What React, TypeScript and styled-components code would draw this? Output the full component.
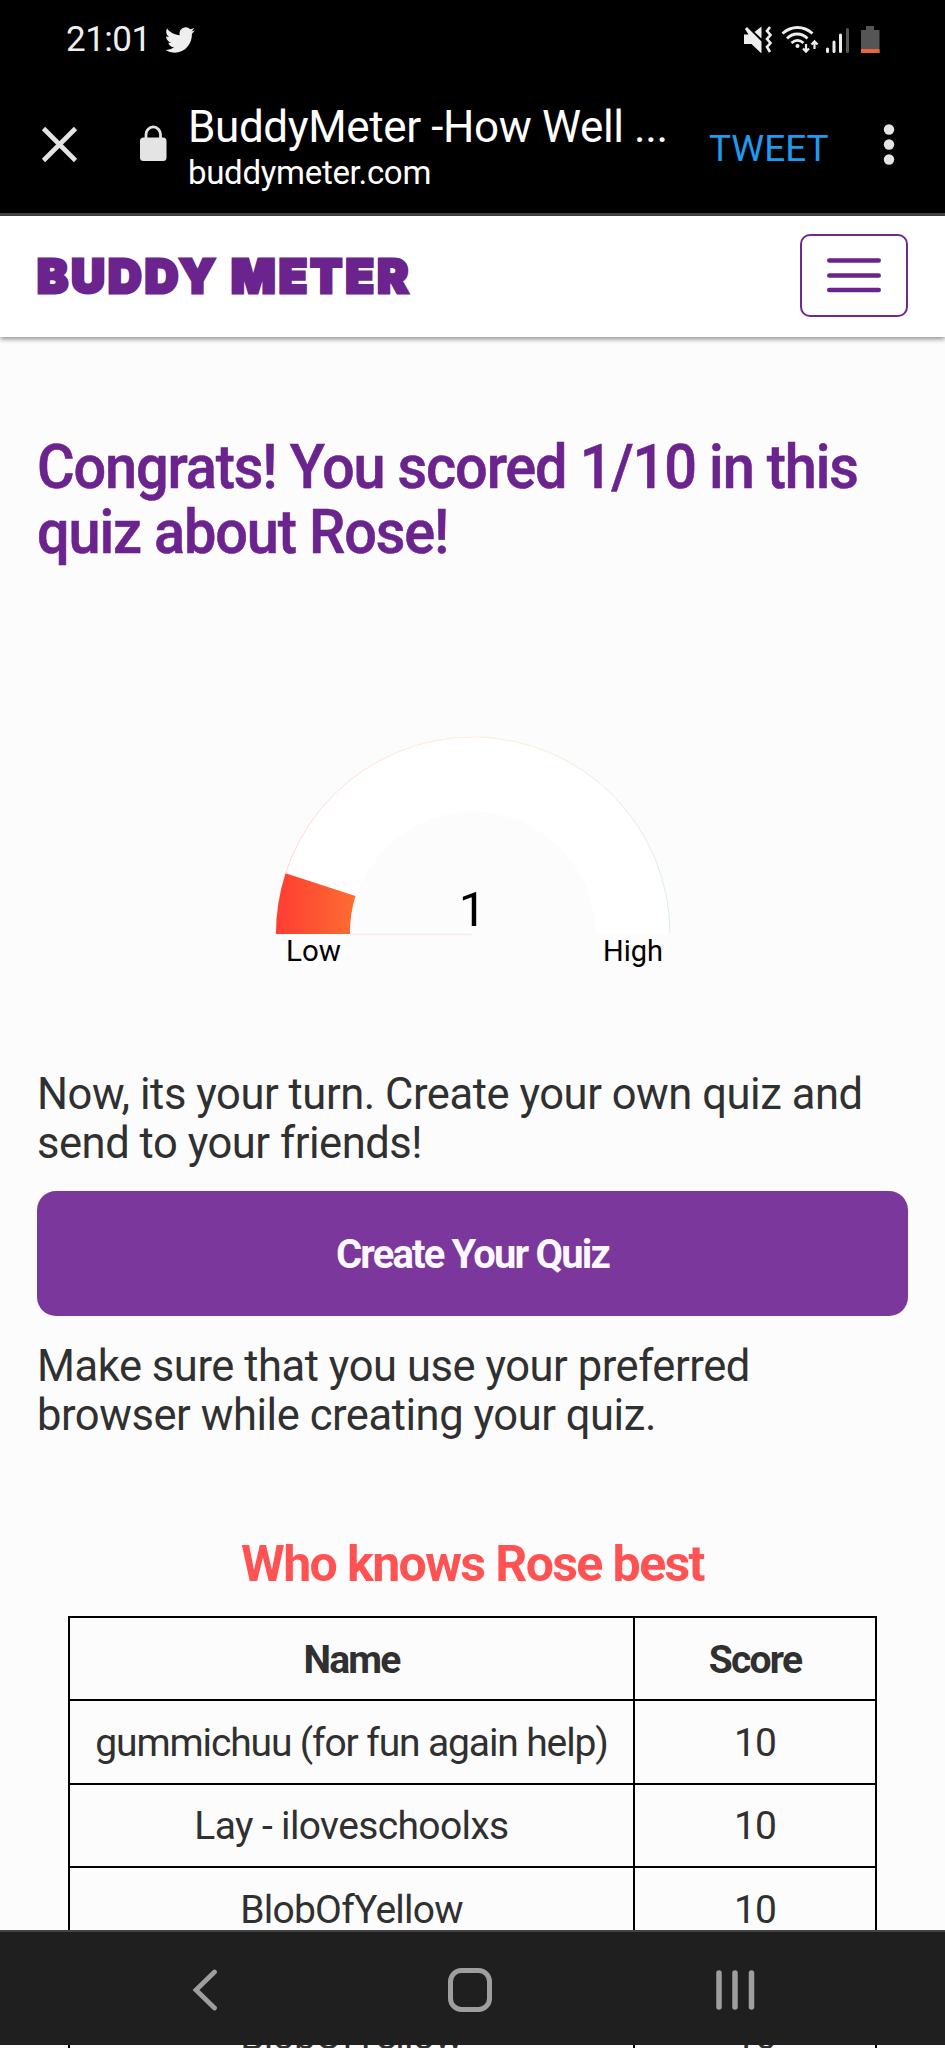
import React from 'react';
import styled, { createGlobalStyle } from 'styled-components';

const GlobalStyle = createGlobalStyle`
  html, body { margin: 0; padding: 0; background: #fcfcfc; }
  * { box-sizing: border-box; }
`;

const Screen = styled.div`
  width: 945px;
  height: 2048px;
  overflow: hidden;
  display: flex;
  flex-direction: column;
  background: #fcfcfc;
  font-family: Roboto, 'Liberation Sans', sans-serif;
  color: #303030;
`;

const StatusBar = styled.div`
  flex: none;
  height: 80px;
  background: #000;
  display: flex;
  align-items: center;
  padding: 0 64px 0 66px;
`;
const Clock = styled.span`
  font-size: 35px;
  line-height: 40px;
  letter-spacing: -0.5px;
  color: #eee;
  margin-right: 14px;
`;
const StatusIcons = styled.div`
  margin-left: auto;
  display: flex;
`;

const BrowserBar = styled.div`
  flex: none;
  height: 136px;
  background: #000;
  border-bottom: 3px solid #444;
  display: flex;
  align-items: flex-start;
  color: #fff;
`;
const CloseIcon = styled.svg`
  margin: 46px 62px 0 41px;
  flex: none;
`;
const LockIcon = styled.svg`
  margin: 45px 21px 0 0;
  flex: none;
`;
const TitleBlock = styled.div`
  width: 521px;
  padding-top: 20px;
`;
const PageTitle = styled.div`
  font-size: 44px;
  line-height: 54px;
  letter-spacing: -0.38px;
  white-space: nowrap;
`;
const PageHost = styled.div`
  font-size: 33px;
  line-height: 37px;
  letter-spacing: -0.3px;
  white-space: nowrap;
`;
const TweetAction = styled.div`
  width: 174px;
  padding-top: 49px;
  font-size: 37px;
  line-height: 40px;
  color: #1d9bf0;
`;
const MoreIcon = styled.svg`
  margin-top: 43px;
  flex: none;
`;

const SiteHeader = styled.header`
  flex: none;
  height: 121px;
  background: #fff;
  box-shadow: 0 2px 5px rgba(0, 0, 0, 0.45);
  display: flex;
  align-items: flex-start;
  justify-content: space-between;
  padding: 18px 37px 0 37px;
`;
const Logo = styled.div`
  font-family: Inter, Roboto, sans-serif;
  font-weight: 900;
  font-size: 46.5px;
  line-height: 85px;
  letter-spacing: 3.2px;
  white-space: nowrap;
  color: #6b238e;
  -webkit-text-stroke: 3.2px #6b238e;
`;
const MenuButton = styled.button`
  width: 108px;
  height: 83px;
  padding: 0;
  background: #fff;
  border: 2px solid #6f2a92;
  border-radius: 10px;
  display: flex;
  align-items: center;
  justify-content: center;
`;

const Content = styled.main`
  flex: none;
  height: 1593px;
  overflow: hidden;
  padding: 98px 37px 0;
`;
const Headline = styled.h1`
  margin: 0;
  font-size: 61px;
  font-weight: 500;
  line-height: 65px;
  color: #6b238e;
  -webkit-text-stroke: 0.6px #6b238e;
`;
const HeadlineLine = styled.span`
  display: block;
  white-space: nowrap;
  letter-spacing: -1.2px;
  transform: scaleX(0.945);
  transform-origin: left;
`;
const Line = styled.span`
  display: block;
  white-space: nowrap;
  letter-spacing: -0.45px;
`;
const Gauge = styled.svg`
  display: block;
  width: 400px;
  height: 250px;
  margin: 165px 0 0 236px;
`;
const Paragraph = styled.p<{ $top: number }>`
  margin: ${(p) => p.$top}px 0 0;
  font-size: 43.5px;
  font-weight: 400;
  line-height: 49px;
`;
const CreateButton = styled.button`
  display: block;
  width: 100%;
  margin: 23px 0 0;
  height: 125px;
  padding: 2px 0 0;
  border: 0;
  border-radius: 19px;
  background: #7b379b;
  color: #fcf8ff;
  font: 700 40px Roboto, sans-serif;
  letter-spacing: -1.85px;
`;
const BoardTitle = styled.h2`
  margin: 94px 0 0;
  text-align: center;
  font-size: 50px;
  font-weight: 700;
  line-height: 60px;
  letter-spacing: -1.6px;
  color: #ff5252;
`;
const Board = styled.table`
  margin: 22px 0 0 31px;
  width: 809px;
  border-collapse: collapse;
  table-layout: fixed;
  border: 2px solid #000;
`;
const Cell = styled.td<{ $head?: boolean; $track?: number }>`
  height: 83.3px;
  padding: 2px 0 0;
  border: 2px solid #000;
  text-align: center;
  white-space: nowrap;
  font-size: 39px;
  font-weight: ${(p) => (p.$head ? 700 : 400)};
  letter-spacing: ${(p) => p.$track ?? -1}px;
`;

const NavBar = styled.nav`
  flex: none;
  height: 115px;
  background: #1f1f1f;
  border-top: 2px solid #444;
  display: flex;
  align-items: flex-start;
`;
const NavIcon = styled.svg<{ $left: number; $top: number }>`
  margin: ${(p) => p.$top}px 0 0 ${(p) => p.$left}px;
  flex: none;
`;
const Peek = styled.div`
  flex: none;
  height: 3px;
  overflow: hidden;
  padding: 0 37px;
`;
const PeekBoard = styled(Board)`
  margin-top: -53px;
`;

const rows: [string, number, number][] = [
  ['gummichuu (for fun again help)', 10, -1.13],
  ['Lay - iloveschoolxs', 10, -0.63],
  ['BlobOfYellow', 10, -0.75],
];

const Columns = () => (
  <colgroup>
    <col width="565" />
    <col width="242" />
  </colgroup>
);

const ScoreRow = ({ row: [name, score, track] }: { row: [string, number, number] }) => (
  <tr>
    <Cell $track={track}>{name}</Cell>
    <Cell>{score}</Cell>
  </tr>
);

export default function App() {
  return (
    <Screen>
      <GlobalStyle />
      <StatusBar>
        <Clock>21:01</Clock>
        <svg width="30" height="26" viewBox="0 2 24 20" preserveAspectRatio="none" fill="#eee">
          <path d="M23.95 4.57a10 10 0 0 1-2.82.77 4.96 4.96 0 0 0 2.16-2.72c-.95.55-2 .95-3.13 1.18a4.92 4.92 0 0 0-8.38 4.48C7.69 8.1 4.07 6.13 1.64 3.16a4.92 4.92 0 0 0 1.52 6.57 4.9 4.9 0 0 1-2.23-.61v.06c0 2.38 1.7 4.37 3.95 4.82a5 5 0 0 1-2.21.09 4.94 4.94 0 0 0 4.6 3.42A9.87 9.87 0 0 1 0 19.54a13.99 13.99 0 0 0 7.55 2.21c9.05 0 14-7.5 14-13.98 0-.21 0-.42-.02-.63a9.94 9.94 0 0 0 2.46-2.55z" />
        </svg>
        <StatusIcons>
          <svg width="140" height="32" viewBox="741 23 140 32" fill="none" stroke="#eee">
            <path fill="#eee" stroke="none" d="M744 33.500h4.500L745 28l2-2 14.500 14.500V52l-9.500-9.500h-8zM754.500 31l7-5.500v12z" />
            <path fill="#eee" stroke="none" d="M744 34.500h8l9 10V52l-9.500-9h-7.500z" />
            <path strokeWidth="2.600" d="M770 26l-3 4 3.500 4-3.500 4 3.500 4-3.500 4 3 5" />
            <path strokeWidth="2.800" d="M782.500 32.500c9-8 21-8 30 0M787 37.500c6-6 14.500-6 20.500 0M791.500 42c4-3.500 8-3.500 12 0" />
            <circle cx="797.500" cy="45" r="2" fill="#eee" stroke="none" />
            <path strokeWidth="2.200" d="M806 43v7.500m-3-3 3 3.200 3-3.200M814.500 48v-7.500m-3 3 3-3.200 3 3.200" />
            <path strokeWidth="3" strokeLinecap="round" d="M827.500 48v2.500M834 41v9.500M840.500 34v16.500" />
            <path strokeWidth="3" strokeLinecap="round" stroke="#555" d="M847.500 28.500v22" />
            <path fill="#555" stroke="none" d="M866 25h8v4h5.500v23h-18.500v-23h5z" />
            <path fill="#e8673c" stroke="none" d="M861 48h18.500v4h-18.500z" />
          </svg>
        </StatusIcons>
      </StatusBar>

      <BrowserBar>
        <CloseIcon width="37" height="37" viewBox="0 0 37 37" stroke="#e4e4e4" strokeWidth="4.600">
          <path d="M2.500 2.500 34.500 34.500M34.500 2.500 2.500 34.500" />
        </CloseIcon>
        <LockIcon width="27" height="37" viewBox="0 0 27 37">
          <rect x="0" y="12.500" width="26.500" height="23.500" rx="3.500" fill="#e4e4e4" />
          <path d="M6 14V9.500a7.200 7.500 0 0 1 14.500 0V14" fill="none" stroke="#e4e4e4" strokeWidth="2.800" />
        </LockIcon>
        <TitleBlock>
          <PageTitle>BuddyMeter -How Well ...</PageTitle>
          <PageHost>buddymeter.com</PageHost>
        </TitleBlock>
        <TweetAction>TWEET</TweetAction>
        <MoreIcon width="12" height="44" viewBox="0 0 12 44" fill="#e4e4e4">
          <circle cx="6" cy="6.500" r="5.200" />
          <circle cx="6" cy="21.500" r="5.200" />
          <circle cx="6" cy="36.500" r="5.200" />
        </MoreIcon>
      </BrowserBar>

      <SiteHeader>
        <Logo>BUDDY METER</Logo>
        <MenuButton aria-label="Menu">
          <svg width="54" height="36" viewBox="0 0 54 36" stroke="#6b238e" strokeWidth="4.600" strokeLinecap="round">
            <path d="M2.300 2.500h49.400M2.300 17.500h49.400M2.300 32h49.400" />
          </svg>
        </MenuButton>
      </SiteHeader>

      <Content>
        <Headline>
          <HeadlineLine>Congrats! You scored 1/10 in this</HeadlineLine>
          <HeadlineLine>quiz about Rose!</HeadlineLine>
        </Headline>
        <Gauge viewBox="273 730 400 250">
          <defs>
            <linearGradient id="level" gradientUnits="userSpaceOnUse" x1="276" y1="0" x2="670" y2="0">
              <stop offset="0" stopColor="#ff3d33" />
              <stop offset="0.5" stopColor="#f9b233" />
              <stop offset="1" stopColor="#4caf70" />
            </linearGradient>
          </defs>
          <path d="M276 934A197 197 0 0 1 670 934H595.500A122.500 122.500 0 0 0 350.500 934Z" fill="#fff" />
          <path d="M276 934A197 197 0 0 1 670 934" fill="none" stroke="url(#level)" strokeWidth="0.800" opacity="0.250" />
          <path d="M350 934.300H472" stroke="#ff3d33" strokeWidth="0.800" opacity="0.140" />
          <path d="M276 934A197 197 0 0 1 285.600 873.200L355.500 896A122.500 122.500 0 0 0 350 934Z" fill="url(#level)" />
          <text x="472.500" y="926" fontSize="49" textAnchor="middle" fill="#000">1</text>
          <text x="313.500" y="961" fontSize="29.500" textAnchor="middle" fill="#000">Low</text>
          <text x="633" y="961" fontSize="29" textAnchor="middle" fill="#000">High</text>
        </Gauge>
        <Paragraph $top={90}>
          <Line>Now, its your turn. Create your own quiz and</Line>
          <Line>send to your friends!</Line>
        </Paragraph>
        <CreateButton>Create Your Quiz</CreateButton>
        <Paragraph $top={26}>
          <Line>Make sure that you use your preferred</Line>
          <Line>browser while creating your quiz.</Line>
        </Paragraph>
        <BoardTitle>Who knows Rose best</BoardTitle>
        <Board>
          <Columns />
          <tbody>
            <tr>
              <Cell as="th" $head $track={-1.8}>Name</Cell>
              <Cell as="th" $head $track={-1.8}>Score</Cell>
            </tr>
            {rows.map((row) => (
              <ScoreRow key={row[0]} row={row} />
            ))}
          </tbody>
        </Board>
      </Content>

      <NavBar>
        <NavIcon $left={192} $top={37} width="26" height="42" viewBox="0 0 26 42" fill="none" stroke="#9e9e9e" strokeWidth="4.800" strokeLinecap="round">
          <path d="M22.500 3 4 21 22.500 39" />
        </NavIcon>
        <NavIcon $left={230} $top={36} width="44" height="44" viewBox="0 0 44 44" fill="none" stroke="#9e9e9e" strokeWidth="5">
          <rect x="2.500" y="2.500" width="39" height="39" rx="11" />
        </NavIcon>
        <NavIcon $left={224} $top={37} width="40" height="42" viewBox="0 0 40 42" stroke="#9e9e9e" strokeWidth="5.500" strokeLinecap="round">
          <path d="M3 4v34M19 4v34M35.500 4v34" />
        </NavIcon>
      </NavBar>
      <Peek>
        <PeekBoard>
          <Columns />
          <tbody>
            <ScoreRow row={rows[2]} />
          </tbody>
        </PeekBoard>
      </Peek>
    </Screen>
  );
}
